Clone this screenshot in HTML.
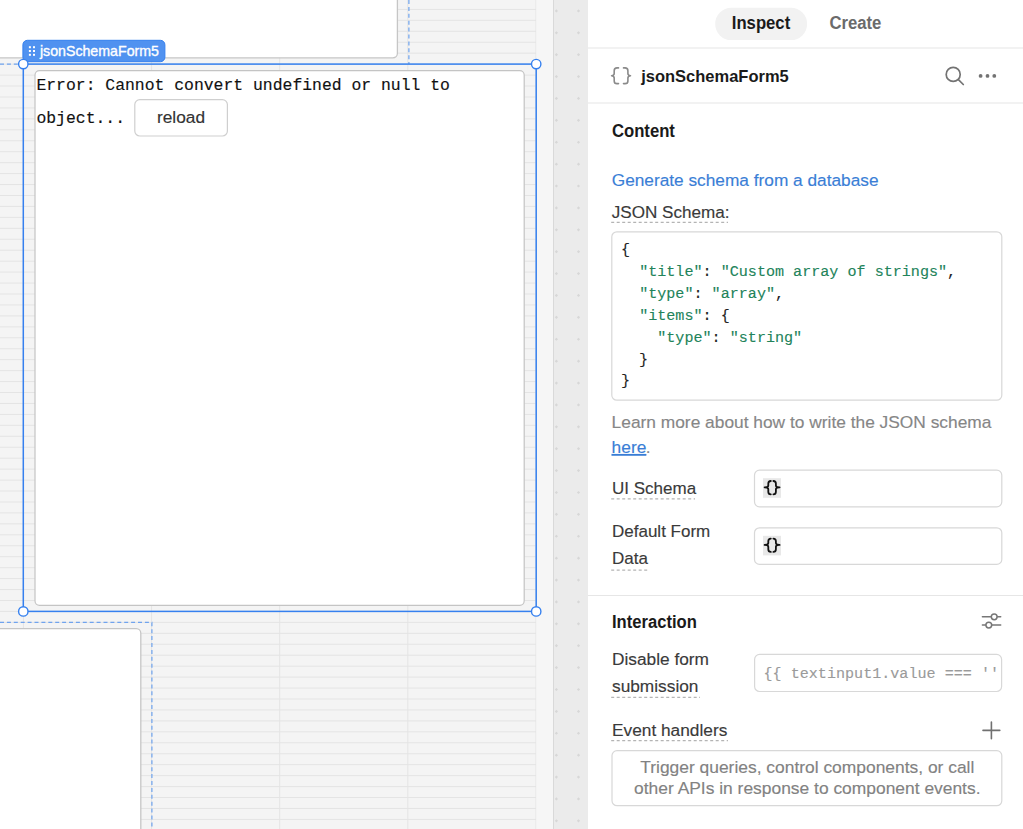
<!DOCTYPE html>
<html><head><meta charset="utf-8"><title>Inspector</title>
<style>html,body{margin:0;padding:0;width:1023px;height:829px;overflow:hidden;background:#fff;font-family:"Liberation Sans", sans-serif;}svg{display:block}</style>
</head><body>
<svg width="1023" height="829" viewBox="0 0 1023 829"><rect x="0" y="0" width="536" height="829" fill="#f4f4f4"/>
<rect x="0" y="8.90" width="536" height="1" fill="#e4e4e4"/>
<rect x="0" y="19.85" width="536" height="1" fill="#e4e4e4"/>
<rect x="0" y="30.79" width="536" height="1" fill="#e4e4e4"/>
<rect x="0" y="41.74" width="536" height="1" fill="#e4e4e4"/>
<rect x="0" y="52.68" width="536" height="1" fill="#e4e4e4"/>
<rect x="0" y="63.63" width="536" height="1" fill="#e4e4e4"/>
<rect x="0" y="74.58" width="536" height="1" fill="#e4e4e4"/>
<rect x="0" y="85.52" width="536" height="1" fill="#e4e4e4"/>
<rect x="0" y="96.47" width="536" height="1" fill="#e4e4e4"/>
<rect x="0" y="107.41" width="536" height="1" fill="#e4e4e4"/>
<rect x="0" y="118.36" width="536" height="1" fill="#e4e4e4"/>
<rect x="0" y="129.31" width="536" height="1" fill="#e4e4e4"/>
<rect x="0" y="140.25" width="536" height="1" fill="#e4e4e4"/>
<rect x="0" y="151.20" width="536" height="1" fill="#e4e4e4"/>
<rect x="0" y="162.14" width="536" height="1" fill="#e4e4e4"/>
<rect x="0" y="173.09" width="536" height="1" fill="#e4e4e4"/>
<rect x="0" y="184.04" width="536" height="1" fill="#e4e4e4"/>
<rect x="0" y="194.98" width="536" height="1" fill="#e4e4e4"/>
<rect x="0" y="205.93" width="536" height="1" fill="#e4e4e4"/>
<rect x="0" y="216.87" width="536" height="1" fill="#e4e4e4"/>
<rect x="0" y="227.82" width="536" height="1" fill="#e4e4e4"/>
<rect x="0" y="238.77" width="536" height="1" fill="#e4e4e4"/>
<rect x="0" y="249.71" width="536" height="1" fill="#e4e4e4"/>
<rect x="0" y="260.66" width="536" height="1" fill="#e4e4e4"/>
<rect x="0" y="271.60" width="536" height="1" fill="#e4e4e4"/>
<rect x="0" y="282.55" width="536" height="1" fill="#e4e4e4"/>
<rect x="0" y="293.50" width="536" height="1" fill="#e4e4e4"/>
<rect x="0" y="304.44" width="536" height="1" fill="#e4e4e4"/>
<rect x="0" y="315.39" width="536" height="1" fill="#e4e4e4"/>
<rect x="0" y="326.33" width="536" height="1" fill="#e4e4e4"/>
<rect x="0" y="337.28" width="536" height="1" fill="#e4e4e4"/>
<rect x="0" y="348.23" width="536" height="1" fill="#e4e4e4"/>
<rect x="0" y="359.17" width="536" height="1" fill="#e4e4e4"/>
<rect x="0" y="370.12" width="536" height="1" fill="#e4e4e4"/>
<rect x="0" y="381.06" width="536" height="1" fill="#e4e4e4"/>
<rect x="0" y="392.01" width="536" height="1" fill="#e4e4e4"/>
<rect x="0" y="402.96" width="536" height="1" fill="#e4e4e4"/>
<rect x="0" y="413.90" width="536" height="1" fill="#e4e4e4"/>
<rect x="0" y="424.85" width="536" height="1" fill="#e4e4e4"/>
<rect x="0" y="435.79" width="536" height="1" fill="#e4e4e4"/>
<rect x="0" y="446.74" width="536" height="1" fill="#e4e4e4"/>
<rect x="0" y="457.69" width="536" height="1" fill="#e4e4e4"/>
<rect x="0" y="468.63" width="536" height="1" fill="#e4e4e4"/>
<rect x="0" y="479.58" width="536" height="1" fill="#e4e4e4"/>
<rect x="0" y="490.52" width="536" height="1" fill="#e4e4e4"/>
<rect x="0" y="501.47" width="536" height="1" fill="#e4e4e4"/>
<rect x="0" y="512.42" width="536" height="1" fill="#e4e4e4"/>
<rect x="0" y="523.36" width="536" height="1" fill="#e4e4e4"/>
<rect x="0" y="534.31" width="536" height="1" fill="#e4e4e4"/>
<rect x="0" y="545.25" width="536" height="1" fill="#e4e4e4"/>
<rect x="0" y="556.20" width="536" height="1" fill="#e4e4e4"/>
<rect x="0" y="567.15" width="536" height="1" fill="#e4e4e4"/>
<rect x="0" y="578.09" width="536" height="1" fill="#e4e4e4"/>
<rect x="0" y="589.04" width="536" height="1" fill="#e4e4e4"/>
<rect x="0" y="599.98" width="536" height="1" fill="#e4e4e4"/>
<rect x="0" y="610.93" width="536" height="1" fill="#e4e4e4"/>
<rect x="0" y="621.88" width="536" height="1" fill="#e4e4e4"/>
<rect x="0" y="632.82" width="536" height="1" fill="#e4e4e4"/>
<rect x="0" y="643.77" width="536" height="1" fill="#e4e4e4"/>
<rect x="0" y="654.71" width="536" height="1" fill="#e4e4e4"/>
<rect x="0" y="665.66" width="536" height="1" fill="#e4e4e4"/>
<rect x="0" y="676.61" width="536" height="1" fill="#e4e4e4"/>
<rect x="0" y="687.55" width="536" height="1" fill="#e4e4e4"/>
<rect x="0" y="698.50" width="536" height="1" fill="#e4e4e4"/>
<rect x="0" y="709.44" width="536" height="1" fill="#e4e4e4"/>
<rect x="0" y="720.39" width="536" height="1" fill="#e4e4e4"/>
<rect x="0" y="731.34" width="536" height="1" fill="#e4e4e4"/>
<rect x="0" y="742.28" width="536" height="1" fill="#e4e4e4"/>
<rect x="0" y="753.23" width="536" height="1" fill="#e4e4e4"/>
<rect x="0" y="764.17" width="536" height="1" fill="#e4e4e4"/>
<rect x="0" y="775.12" width="536" height="1" fill="#e4e4e4"/>
<rect x="0" y="786.07" width="536" height="1" fill="#e4e4e4"/>
<rect x="0" y="797.01" width="536" height="1" fill="#e4e4e4"/>
<rect x="0" y="807.96" width="536" height="1" fill="#e4e4e4"/>
<rect x="0" y="818.90" width="536" height="1" fill="#e4e4e4"/>
<rect x="22.90" y="0" width="1" height="829" fill="#e4e4e4"/>
<rect x="151.05" y="0" width="1" height="829" fill="#e4e4e4"/>
<rect x="279.20" y="0" width="1" height="829" fill="#e4e4e4"/>
<rect x="407.35" y="0" width="1" height="829" fill="#e4e4e4"/>
<rect x="535.50" y="0" width="1" height="829" fill="#e4e4e4"/>
<rect x="536.5" y="0" width="16.5" height="829" fill="#f6f6f6"/>
<rect x="553" y="0" width="1" height="829" fill="#d9d9d9"/>
<rect x="587.2" y="0" width="0.8" height="829" fill="#e2e2e2"/>
<rect x="554" y="0" width="34" height="829" fill="#ebebeb"/>
<path d="M556.40 9.30 L558.00 10.90 L556.40 12.50 L554.80 10.90Z" fill="#d7d7d7"/>
<path d="M578.50 9.30 L580.10 10.90 L578.50 12.50 L576.90 10.90Z" fill="#d7d7d7"/>
<path d="M556.40 31.19 L558.00 32.79 L556.40 34.39 L554.80 32.79Z" fill="#d7d7d7"/>
<path d="M578.50 31.19 L580.10 32.79 L578.50 34.39 L576.90 32.79Z" fill="#d7d7d7"/>
<path d="M556.40 53.08 L558.00 54.68 L556.40 56.28 L554.80 54.68Z" fill="#d7d7d7"/>
<path d="M578.50 53.08 L580.10 54.68 L578.50 56.28 L576.90 54.68Z" fill="#d7d7d7"/>
<path d="M556.40 74.97 L558.00 76.57 L556.40 78.17 L554.80 76.57Z" fill="#d7d7d7"/>
<path d="M578.50 74.97 L580.10 76.57 L578.50 78.17 L576.90 76.57Z" fill="#d7d7d7"/>
<path d="M556.40 96.86 L558.00 98.46 L556.40 100.06 L554.80 98.46Z" fill="#d7d7d7"/>
<path d="M578.50 96.86 L580.10 98.46 L578.50 100.06 L576.90 98.46Z" fill="#d7d7d7"/>
<path d="M556.40 118.75 L558.00 120.35 L556.40 121.95 L554.80 120.35Z" fill="#d7d7d7"/>
<path d="M578.50 118.75 L580.10 120.35 L578.50 121.95 L576.90 120.35Z" fill="#d7d7d7"/>
<path d="M556.40 140.64 L558.00 142.24 L556.40 143.84 L554.80 142.24Z" fill="#d7d7d7"/>
<path d="M578.50 140.64 L580.10 142.24 L578.50 143.84 L576.90 142.24Z" fill="#d7d7d7"/>
<path d="M556.40 162.53 L558.00 164.13 L556.40 165.73 L554.80 164.13Z" fill="#d7d7d7"/>
<path d="M578.50 162.53 L580.10 164.13 L578.50 165.73 L576.90 164.13Z" fill="#d7d7d7"/>
<path d="M556.40 184.42 L558.00 186.02 L556.40 187.62 L554.80 186.02Z" fill="#d7d7d7"/>
<path d="M578.50 184.42 L580.10 186.02 L578.50 187.62 L576.90 186.02Z" fill="#d7d7d7"/>
<path d="M556.40 206.31 L558.00 207.91 L556.40 209.51 L554.80 207.91Z" fill="#d7d7d7"/>
<path d="M578.50 206.31 L580.10 207.91 L578.50 209.51 L576.90 207.91Z" fill="#d7d7d7"/>
<path d="M556.40 228.20 L558.00 229.80 L556.40 231.40 L554.80 229.80Z" fill="#d7d7d7"/>
<path d="M578.50 228.20 L580.10 229.80 L578.50 231.40 L576.90 229.80Z" fill="#d7d7d7"/>
<path d="M556.40 250.09 L558.00 251.69 L556.40 253.29 L554.80 251.69Z" fill="#d7d7d7"/>
<path d="M578.50 250.09 L580.10 251.69 L578.50 253.29 L576.90 251.69Z" fill="#d7d7d7"/>
<path d="M556.40 271.98 L558.00 273.58 L556.40 275.18 L554.80 273.58Z" fill="#d7d7d7"/>
<path d="M578.50 271.98 L580.10 273.58 L578.50 275.18 L576.90 273.58Z" fill="#d7d7d7"/>
<path d="M556.40 293.87 L558.00 295.47 L556.40 297.07 L554.80 295.47Z" fill="#d7d7d7"/>
<path d="M578.50 293.87 L580.10 295.47 L578.50 297.07 L576.90 295.47Z" fill="#d7d7d7"/>
<path d="M556.40 315.76 L558.00 317.36 L556.40 318.96 L554.80 317.36Z" fill="#d7d7d7"/>
<path d="M578.50 315.76 L580.10 317.36 L578.50 318.96 L576.90 317.36Z" fill="#d7d7d7"/>
<path d="M556.40 337.65 L558.00 339.25 L556.40 340.85 L554.80 339.25Z" fill="#d7d7d7"/>
<path d="M578.50 337.65 L580.10 339.25 L578.50 340.85 L576.90 339.25Z" fill="#d7d7d7"/>
<path d="M556.40 359.54 L558.00 361.14 L556.40 362.74 L554.80 361.14Z" fill="#d7d7d7"/>
<path d="M578.50 359.54 L580.10 361.14 L578.50 362.74 L576.90 361.14Z" fill="#d7d7d7"/>
<path d="M556.40 381.43 L558.00 383.03 L556.40 384.63 L554.80 383.03Z" fill="#d7d7d7"/>
<path d="M578.50 381.43 L580.10 383.03 L578.50 384.63 L576.90 383.03Z" fill="#d7d7d7"/>
<path d="M556.40 403.32 L558.00 404.92 L556.40 406.52 L554.80 404.92Z" fill="#d7d7d7"/>
<path d="M578.50 403.32 L580.10 404.92 L578.50 406.52 L576.90 404.92Z" fill="#d7d7d7"/>
<path d="M556.40 425.21 L558.00 426.81 L556.40 428.41 L554.80 426.81Z" fill="#d7d7d7"/>
<path d="M578.50 425.21 L580.10 426.81 L578.50 428.41 L576.90 426.81Z" fill="#d7d7d7"/>
<path d="M556.40 447.10 L558.00 448.70 L556.40 450.30 L554.80 448.70Z" fill="#d7d7d7"/>
<path d="M578.50 447.10 L580.10 448.70 L578.50 450.30 L576.90 448.70Z" fill="#d7d7d7"/>
<path d="M556.40 468.99 L558.00 470.59 L556.40 472.19 L554.80 470.59Z" fill="#d7d7d7"/>
<path d="M578.50 468.99 L580.10 470.59 L578.50 472.19 L576.90 470.59Z" fill="#d7d7d7"/>
<path d="M556.40 490.88 L558.00 492.48 L556.40 494.08 L554.80 492.48Z" fill="#d7d7d7"/>
<path d="M578.50 490.88 L580.10 492.48 L578.50 494.08 L576.90 492.48Z" fill="#d7d7d7"/>
<path d="M556.40 512.77 L558.00 514.37 L556.40 515.97 L554.80 514.37Z" fill="#d7d7d7"/>
<path d="M578.50 512.77 L580.10 514.37 L578.50 515.97 L576.90 514.37Z" fill="#d7d7d7"/>
<path d="M556.40 534.66 L558.00 536.26 L556.40 537.86 L554.80 536.26Z" fill="#d7d7d7"/>
<path d="M578.50 534.66 L580.10 536.26 L578.50 537.86 L576.90 536.26Z" fill="#d7d7d7"/>
<path d="M556.40 556.55 L558.00 558.15 L556.40 559.75 L554.80 558.15Z" fill="#d7d7d7"/>
<path d="M578.50 556.55 L580.10 558.15 L578.50 559.75 L576.90 558.15Z" fill="#d7d7d7"/>
<path d="M556.40 578.44 L558.00 580.04 L556.40 581.64 L554.80 580.04Z" fill="#d7d7d7"/>
<path d="M578.50 578.44 L580.10 580.04 L578.50 581.64 L576.90 580.04Z" fill="#d7d7d7"/>
<path d="M556.40 600.33 L558.00 601.93 L556.40 603.53 L554.80 601.93Z" fill="#d7d7d7"/>
<path d="M578.50 600.33 L580.10 601.93 L578.50 603.53 L576.90 601.93Z" fill="#d7d7d7"/>
<path d="M556.40 622.22 L558.00 623.82 L556.40 625.42 L554.80 623.82Z" fill="#d7d7d7"/>
<path d="M578.50 622.22 L580.10 623.82 L578.50 625.42 L576.90 623.82Z" fill="#d7d7d7"/>
<path d="M556.40 644.11 L558.00 645.71 L556.40 647.31 L554.80 645.71Z" fill="#d7d7d7"/>
<path d="M578.50 644.11 L580.10 645.71 L578.50 647.31 L576.90 645.71Z" fill="#d7d7d7"/>
<path d="M556.40 666.00 L558.00 667.60 L556.40 669.20 L554.80 667.60Z" fill="#d7d7d7"/>
<path d="M578.50 666.00 L580.10 667.60 L578.50 669.20 L576.90 667.60Z" fill="#d7d7d7"/>
<path d="M556.40 687.89 L558.00 689.49 L556.40 691.09 L554.80 689.49Z" fill="#d7d7d7"/>
<path d="M578.50 687.89 L580.10 689.49 L578.50 691.09 L576.90 689.49Z" fill="#d7d7d7"/>
<path d="M556.40 709.78 L558.00 711.38 L556.40 712.98 L554.80 711.38Z" fill="#d7d7d7"/>
<path d="M578.50 709.78 L580.10 711.38 L578.50 712.98 L576.90 711.38Z" fill="#d7d7d7"/>
<path d="M556.40 731.67 L558.00 733.27 L556.40 734.87 L554.80 733.27Z" fill="#d7d7d7"/>
<path d="M578.50 731.67 L580.10 733.27 L578.50 734.87 L576.90 733.27Z" fill="#d7d7d7"/>
<path d="M556.40 753.56 L558.00 755.16 L556.40 756.76 L554.80 755.16Z" fill="#d7d7d7"/>
<path d="M578.50 753.56 L580.10 755.16 L578.50 756.76 L576.90 755.16Z" fill="#d7d7d7"/>
<path d="M556.40 775.45 L558.00 777.05 L556.40 778.65 L554.80 777.05Z" fill="#d7d7d7"/>
<path d="M578.50 775.45 L580.10 777.05 L578.50 778.65 L576.90 777.05Z" fill="#d7d7d7"/>
<path d="M556.40 797.34 L558.00 798.94 L556.40 800.54 L554.80 798.94Z" fill="#d7d7d7"/>
<path d="M578.50 797.34 L580.10 798.94 L578.50 800.54 L576.90 798.94Z" fill="#d7d7d7"/>
<path d="M556.40 819.23 L558.00 820.83 L556.40 822.43 L554.80 820.83Z" fill="#d7d7d7"/>
<path d="M578.50 819.23 L580.10 820.83 L578.50 822.43 L576.90 820.83Z" fill="#d7d7d7"/>
<rect x="-10" y="-10" width="407.4" height="67.8" rx="4.5" fill="#fff" stroke="#c6c6c6" stroke-width="1.3"/>
<rect x="-10" y="628.7" width="150.8" height="250" rx="4.5" fill="#fff" stroke="#c6c6c6" stroke-width="1.3"/>
<path d="M0 622.4 H151.9 V829" fill="none" stroke="#6fa3ee" stroke-width="1.2" stroke-dasharray="4 2.9"/>
<path d="M408.9 0 V64" fill="none" stroke="#6fa3ee" stroke-width="1.2" stroke-dasharray="4 2.9"/>
<path d="M0 64.1 H23" fill="none" stroke="#6fa3ee" stroke-width="1.2" stroke-dasharray="4 2.9"/>
<rect x="35" y="70.6" width="489.2" height="534.7" rx="4.5" fill="#fff" stroke="#c4c4c4" stroke-width="1.2"/>
<text transform="translate(36.4 90) scale(1 1.0)" x="0" y="0" font-family='"Liberation Mono", monospace' font-size="16.42" font-weight="normal" fill="#111" text-anchor="start" stroke="#111" stroke-width="0.15" >Error: Cannot convert undefined or null to</text>
<text transform="translate(36.4 122.5) scale(1 1.0)" x="0" y="0" font-family='"Liberation Mono", monospace' font-size="16.42" font-weight="normal" fill="#111" text-anchor="start" stroke="#111" stroke-width="0.15" >object...</text>
<rect x="134.8" y="99.6" width="92.6" height="36.4" rx="5" fill="#fff" stroke="#cfcfcf" stroke-width="1.2"/>
<text transform="translate(181 122.7) scale(1 1.0)" x="0" y="0" font-family='"Liberation Sans", sans-serif' font-size="17.3" font-weight="normal" fill="#333" text-anchor="middle" stroke="#333" stroke-width="0.15" >reload</text>
<rect x="23.3" y="64.1" width="512.9" height="547.3" fill="none" stroke="#3580ef" stroke-width="1.5"/>
<rect x="22.9" y="40.3" width="142" height="21.4" rx="4.5" fill="#5092f0" stroke="#3580ee" stroke-width="1"/>
<rect x="28.9" y="46.2" width="2" height="2" fill="#fff"/>
<rect x="28.9" y="50.0" width="2" height="2" fill="#fff"/>
<rect x="28.9" y="53.8" width="2" height="2" fill="#fff"/>
<rect x="33.0" y="46.2" width="2" height="2" fill="#fff"/>
<rect x="33.0" y="50.0" width="2" height="2" fill="#fff"/>
<rect x="33.0" y="53.8" width="2" height="2" fill="#fff"/>
<text transform="translate(39.9 56) scale(1 1.0)" x="0" y="0" font-family='"Liberation Sans", sans-serif' font-size="14.2" font-weight="normal" fill="#fff" text-anchor="start"  stroke="#fff" stroke-width="0.35">jsonSchemaForm5</text>
<circle cx="23.3" cy="64.1" r="4.7" fill="#fff" stroke="#3580ef" stroke-width="1.4"/>
<circle cx="536.2" cy="64.1" r="4.7" fill="#fff" stroke="#3580ef" stroke-width="1.4"/>
<circle cx="23.3" cy="611.4" r="4.7" fill="#fff" stroke="#3580ef" stroke-width="1.4"/>
<circle cx="536.2" cy="611.4" r="4.7" fill="#fff" stroke="#3580ef" stroke-width="1.4"/>
<rect x="588" y="0" width="435" height="829" fill="#fff"/>
<rect x="588" y="47.5" width="435" height="1" fill="#e6e6e6"/>
<rect x="588" y="102.5" width="435" height="1" fill="#e6e6e6"/>
<rect x="588" y="595.0" width="435" height="1" fill="#e6e6e6"/>
<rect x="715.2" y="7.8" width="91.9" height="32.3" rx="16.1" fill="#f2f2f2"/>
<text transform="translate(761 29.2) scale(1 1.05)" x="0" y="0" font-family='"Liberation Sans", sans-serif' font-size="16.7" font-weight="bold" fill="#1a1a1a" text-anchor="middle"  >Inspect</text>
<text transform="translate(855.4 29.2) scale(1 1.05)" x="0" y="0" font-family='"Liberation Sans", sans-serif' font-size="16.7" font-weight="bold" fill="#6b6b6b" text-anchor="middle"  >Create</text>
<path d="M618.5 67.9 H617 Q614.2 67.9 614.2 70.7 V73.6 Q614.2 75.6 611.6 75.7 Q614.2 75.9 614.2 77.9 V80.9 Q614.2 83.6 617 83.6 H618.5" fill="none" stroke="#8a8a8a" stroke-width="1.6" stroke-linecap="round" stroke-linejoin="round"/>
<path d="M623.5 67.9 H625 Q627.9 67.9 627.9 70.7 V73.6 Q627.9 75.6 630.5 75.7 Q627.9 75.9 627.9 77.9 V80.9 Q627.9 83.6 625 83.6 H623.5" fill="none" stroke="#8a8a8a" stroke-width="1.6" stroke-linecap="round" stroke-linejoin="round"/>
<text transform="translate(641.2 82.3) scale(1 1.05)" x="0" y="0" font-family='"Liberation Sans", sans-serif' font-size="16.5" font-weight="bold" fill="#1a1a1a" text-anchor="start"  >jsonSchemaForm5</text>
<circle cx="953.2" cy="74.4" r="7" fill="none" stroke="#737373" stroke-width="1.7"/>
<path d="M958.4 79.6 L963.3 84.5" stroke="#737373" stroke-width="1.7" stroke-linecap="round"/>
<circle cx="980.6" cy="75.9" r="1.9" fill="#737373"/>
<circle cx="987.5" cy="75.9" r="1.9" fill="#737373"/>
<circle cx="994.3" cy="75.9" r="1.9" fill="#737373"/>
<text transform="translate(611.9 136.7) scale(1 1.05)" x="0" y="0" font-family='"Liberation Sans", sans-serif' font-size="16.7" font-weight="bold" fill="#1a1a1a" text-anchor="start"  >Content</text>
<text transform="translate(611.7 186.4) scale(1 1.0)" x="0" y="0" font-family='"Liberation Sans", sans-serif' font-size="17.27" font-weight="normal" fill="#3a7ed6" text-anchor="start" stroke="#3a7ed6" stroke-width="0.15" >Generate schema from a database</text>
<text transform="translate(611.7 217.8) scale(1 1.0)" x="0" y="0" font-family='"Liberation Sans", sans-serif' font-size="17.1" font-weight="normal" fill="#3a3a3a" text-anchor="start" stroke="#3a3a3a" stroke-width="0.15" >JSON Schema:</text>
<path d="M611.2 222.3 H728" stroke="#b4b4b4" stroke-width="1.2" stroke-dasharray="3 2.5"/>
<rect x="611.8" y="231.8" width="390" height="168.4" rx="5" fill="#fff" stroke="#d8d8d8" stroke-width="1.2"/>
<text x="621" y="254.30" font-family='"Liberation Mono", monospace' font-size="15.1" stroke-width="0.12" xml:space="preserve" style="white-space:pre"><tspan fill="#222" stroke="#222">{</tspan></text>
<text x="621" y="276.15" font-family='"Liberation Mono", monospace' font-size="15.1" stroke-width="0.12" xml:space="preserve" style="white-space:pre"><tspan fill="#222" stroke="#222">  </tspan><tspan fill="#22835a" stroke="#22835a">&quot;title&quot;</tspan><tspan fill="#222" stroke="#222">: </tspan><tspan fill="#22835a" stroke="#22835a">&quot;Custom array of strings&quot;</tspan><tspan fill="#222" stroke="#222">,</tspan></text>
<text x="621" y="298.00" font-family='"Liberation Mono", monospace' font-size="15.1" stroke-width="0.12" xml:space="preserve" style="white-space:pre"><tspan fill="#222" stroke="#222">  </tspan><tspan fill="#22835a" stroke="#22835a">&quot;type&quot;</tspan><tspan fill="#222" stroke="#222">: </tspan><tspan fill="#22835a" stroke="#22835a">&quot;array&quot;</tspan><tspan fill="#222" stroke="#222">,</tspan></text>
<text x="621" y="319.85" font-family='"Liberation Mono", monospace' font-size="15.1" stroke-width="0.12" xml:space="preserve" style="white-space:pre"><tspan fill="#222" stroke="#222">  </tspan><tspan fill="#22835a" stroke="#22835a">&quot;items&quot;</tspan><tspan fill="#222" stroke="#222">: {</tspan></text>
<text x="621" y="341.70" font-family='"Liberation Mono", monospace' font-size="15.1" stroke-width="0.12" xml:space="preserve" style="white-space:pre"><tspan fill="#222" stroke="#222">    </tspan><tspan fill="#22835a" stroke="#22835a">&quot;type&quot;</tspan><tspan fill="#222" stroke="#222">: </tspan><tspan fill="#22835a" stroke="#22835a">&quot;string&quot;</tspan></text>
<text x="621" y="363.55" font-family='"Liberation Mono", monospace' font-size="15.1" stroke-width="0.12" xml:space="preserve" style="white-space:pre"><tspan fill="#222" stroke="#222">  }</tspan></text>
<text x="621" y="385.40" font-family='"Liberation Mono", monospace' font-size="15.1" stroke-width="0.12" xml:space="preserve" style="white-space:pre"><tspan fill="#222" stroke="#222">}</tspan></text>
<text transform="translate(611.6 428.1) scale(1 1.0)" x="0" y="0" font-family='"Liberation Sans", sans-serif' font-size="17.35" font-weight="normal" fill="#868686" text-anchor="start" stroke="#868686" stroke-width="0.15" >Learn more about how to write the JSON schema</text>
<text transform="translate(611.6 453) scale(1 1.0)" x="0" y="0" font-family='"Liberation Sans", sans-serif' font-size="17.35" font-weight="normal" fill="#3a7ed6" text-anchor="start" stroke="#3a7ed6" stroke-width="0.15" text-decoration="underline">here</text>
<text transform="translate(645.8 453) scale(1 1.0)" x="0" y="0" font-family='"Liberation Sans", sans-serif' font-size="17.35" font-weight="normal" fill="#868686" text-anchor="start" stroke="#868686" stroke-width="0.15" >.</text>
<text transform="translate(612 494) scale(1 1.0)" x="0" y="0" font-family='"Liberation Sans", sans-serif' font-size="17.0" font-weight="normal" fill="#3a3a3a" text-anchor="start" stroke="#3a3a3a" stroke-width="0.15" >UI Schema</text>
<path d="M611.2 498.8 H695" stroke="#b4b4b4" stroke-width="1.2" stroke-dasharray="3 2.5"/>
<rect x="754.5" y="470.2" width="247.3" height="36.6" rx="5" fill="#fff" stroke="#d8d8d8" stroke-width="1.2"/>
<rect x="763" y="478.2" width="18" height="19.6" fill="#e8e8e8"/>
<g transform="translate(0 0)" fill="none" stroke="#111" stroke-width="1.8" stroke-linecap="round" stroke-linejoin="round"><path d="M770.8 481 Q768.3 481 768.3 483.6 V485.4 Q768.3 487.3 764.6 487.3 Q768.3 487.3 768.3 489.2 V491.7 Q768.3 494.3 770.8 494.3"/><path d="M773.4 481 Q775.9 481 775.9 483.6 V485.4 Q775.9 487.3 779.6 487.3 Q775.9 487.3 775.9 489.2 V491.7 Q775.9 494.3 773.4 494.3"/></g>
<text transform="translate(612 537.4) scale(1 1.0)" x="0" y="0" font-family='"Liberation Sans", sans-serif' font-size="17.0" font-weight="normal" fill="#3a3a3a" text-anchor="start" stroke="#3a3a3a" stroke-width="0.15" >Default Form</text>
<text transform="translate(612 564.4) scale(1 1.0)" x="0" y="0" font-family='"Liberation Sans", sans-serif' font-size="17.0" font-weight="normal" fill="#3a3a3a" text-anchor="start" stroke="#3a3a3a" stroke-width="0.15" >Data</text>
<path d="M611.2 570.2 H648" stroke="#b4b4b4" stroke-width="1.2" stroke-dasharray="3 2.5"/>
<rect x="754.5" y="527.8" width="247.3" height="36.6" rx="5" fill="#fff" stroke="#d8d8d8" stroke-width="1.2"/>
<rect x="763" y="535.8" width="18" height="19.6" fill="#e8e8e8"/>
<g transform="translate(0 57.6)" fill="none" stroke="#111" stroke-width="1.8" stroke-linecap="round" stroke-linejoin="round"><path d="M770.8 481 Q768.3 481 768.3 483.6 V485.4 Q768.3 487.3 764.6 487.3 Q768.3 487.3 768.3 489.2 V491.7 Q768.3 494.3 770.8 494.3"/><path d="M773.4 481 Q775.9 481 775.9 483.6 V485.4 Q775.9 487.3 779.6 487.3 Q775.9 487.3 775.9 489.2 V491.7 Q775.9 494.3 773.4 494.3"/></g>
<text transform="translate(612 628.3) scale(1 1.05)" x="0" y="0" font-family='"Liberation Sans", sans-serif' font-size="16.6" font-weight="bold" fill="#1a1a1a" text-anchor="start"  >Interaction</text>
<path d="M982.4 616.8 H1000.7 M982.4 625.1 H1000.7" stroke="#777" stroke-width="1.5" stroke-linecap="round"/>
<circle cx="994.2" cy="616.8" r="2.9" fill="#fff" stroke="#777" stroke-width="1.5"/>
<circle cx="988.8" cy="625.1" r="2.9" fill="#fff" stroke="#777" stroke-width="1.5"/>
<text transform="translate(612 664.5) scale(1 1.0)" x="0" y="0" font-family='"Liberation Sans", sans-serif' font-size="17.3" font-weight="normal" fill="#3a3a3a" text-anchor="start" stroke="#3a3a3a" stroke-width="0.15" >Disable form</text>
<text transform="translate(612 691.5) scale(1 1.0)" x="0" y="0" font-family='"Liberation Sans", sans-serif' font-size="17.3" font-weight="normal" fill="#3a3a3a" text-anchor="start" stroke="#3a3a3a" stroke-width="0.15" >submission</text>
<path d="M611.2 697.3 H700" stroke="#b4b4b4" stroke-width="1.2" stroke-dasharray="3 2.5"/>
<rect x="754.6" y="654.4" width="247" height="37.1" rx="5" fill="#fff" stroke="#d8d8d8" stroke-width="1.2"/>
<clipPath id="c3"><rect x="756" y="655" width="244" height="36"/></clipPath>
<g clip-path="url(#c3)">
<text transform="translate(763.5 678) scale(1 1.0)" x="0" y="0" font-family='"Liberation Mono", monospace' font-size="15.1" font-weight="normal" fill="#9a9a9a" text-anchor="start" stroke="#9a9a9a" stroke-width="0.12" xml:space="preserve">{{ textinput1.value === &#x27;&#x27;</text>
</g>
<text transform="translate(612 735.5) scale(1 1.0)" x="0" y="0" font-family='"Liberation Sans", sans-serif' font-size="17.3" font-weight="normal" fill="#3a3a3a" text-anchor="start" stroke="#3a3a3a" stroke-width="0.15" >Event handlers</text>
<path d="M611.2 740.7 H728" stroke="#b4b4b4" stroke-width="1.2" stroke-dasharray="3 2.5"/>
<path d="M983 730.4 H999.8 M991.4 722 V738.8" stroke="#707070" stroke-width="1.6" stroke-linecap="round"/>
<rect x="612" y="750.6" width="389.8" height="55.1" rx="5" fill="#fff" stroke="#d8d8d8" stroke-width="1.2"/>
<text transform="translate(807.3 772.7) scale(1 1.0)" x="0" y="0" font-family='"Liberation Sans", sans-serif' font-size="17.42" font-weight="normal" fill="#828282" text-anchor="middle" stroke="#828282" stroke-width="0.15" >Trigger queries, control components, or call</text>
<text transform="translate(807.3 794.1) scale(1 1.0)" x="0" y="0" font-family='"Liberation Sans", sans-serif' font-size="17.42" font-weight="normal" fill="#828282" text-anchor="middle" stroke="#828282" stroke-width="0.15" >other APIs in response to component events.</text></svg>
</body></html>
